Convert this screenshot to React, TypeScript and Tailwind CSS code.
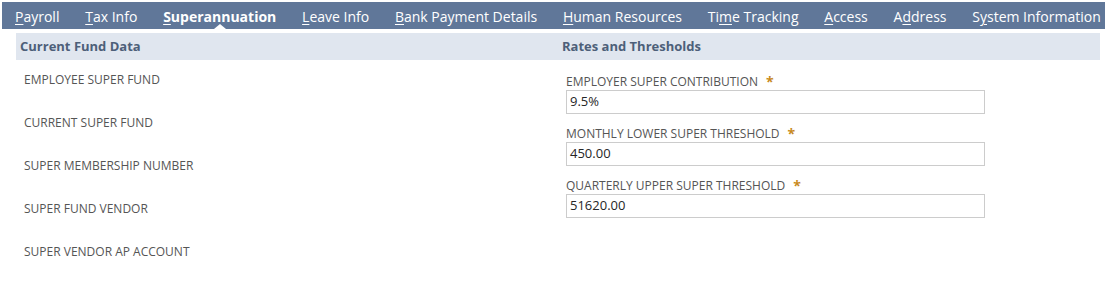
import React from 'react';

const tabs: { pre: string; key: string; post: string; active?: boolean }[] = [
  { pre: '', key: 'P', post: 'ayroll' },
  { pre: '', key: 'T', post: 'ax Info' },
  { pre: '', key: 'S', post: 'uperannuation', active: true },
  { pre: '', key: 'L', post: 'eave Info' },
  { pre: '', key: 'B', post: 'ank Payment Details' },
  { pre: '', key: 'H', post: 'uman Resources' },
  { pre: 'Ti', key: 'm', post: 'e Tracking' },
  { pre: '', key: 'A', post: 'ccess' },
  { pre: 'A', key: 'd', post: 'dress' },
  { pre: 'S', key: 'y', post: 'stem Information' },
];

const fundFields = [
  'EMPLOYEE SUPER FUND',
  'CURRENT SUPER FUND',
  'SUPER MEMBERSHIP NUMBER',
  'SUPER FUND VENDOR',
  'SUPER VENDOR AP ACCOUNT',
];

const rateFields = [
  { label: 'EMPLOYER SUPER CONTRIBUTION', value: '9.5%' },
  { label: 'MONTHLY LOWER SUPER THRESHOLD', value: '450.00' },
  { label: 'QUARTERLY UPPER SUPER THRESHOLD', value: '51620.00' },
];

export default function App() {
  return (
    <div className="w-[1105px] h-[288px] bg-white pt-[2px] font-['Open_Sans',sans-serif]">
      {/* Tab strip */}
      <div className="ml-[2px] h-[27px] bg-[#607799] flex items-center">
        {tabs.map(t => (
          <div
            key={t.pre + t.key + t.post}
            className={`relative h-full flex items-center pt-[2px] pl-[13px] pr-[12.8px] text-[14px] text-white whitespace-nowrap ${t.active ? 'font-bold' : ''}`}
          >
            <span>
              {t.pre}
              <span className="underline underline-offset-2">{t.key}</span>
              {t.post}
            </span>
            {t.active && (
              <span className="absolute bottom-0 left-1/2 -translate-x-1/2 w-0 h-0 border-l-[6px] border-r-[6px] border-b-[5px] border-l-transparent border-r-transparent border-b-white" />
            )}
          </div>
        ))}
      </div>

      {/* Section header */}
      <div className="mt-[4px] ml-[16px] w-[1084px] h-[27px] bg-[#e0e6ef] grid grid-cols-2 items-center">
        <div className="pl-[4px] text-[13px] font-bold text-[#4d5f79]">Current Fund Data</div>
        <div className="pl-[4px] text-[13px] font-bold text-[#4d5f79]">Rates and Thresholds</div>
      </div>

      <div className="ml-[16px] w-[1084px] grid grid-cols-2">
        <div className="pl-[8px] pt-[11px] flex flex-col gap-[26px]">
          {fundFields.map(f => (
            <div key={f} className="text-[12px] leading-[17px] text-[#555]">{f}</div>
          ))}
        </div>
        <div className="pl-[8px] pt-[13px] flex flex-col gap-[11px]">
          {rateFields.map(f => (
            <div key={f.label} className="flex flex-col">
              <div className="text-[12px] leading-[17px] text-[#555] flex items-center">
                {f.label}
                <span className="ml-[8px] text-[#c88a1e] text-[14px] font-bold leading-none">*</span>
              </div>
              <div className="w-[419px] h-[24px] border border-[#cccccc] bg-white flex items-center px-[3px] text-[13px] text-[#262626]">
                {f.value}
              </div>
            </div>
          ))}
        </div>
      </div>
    </div>
  );
}
